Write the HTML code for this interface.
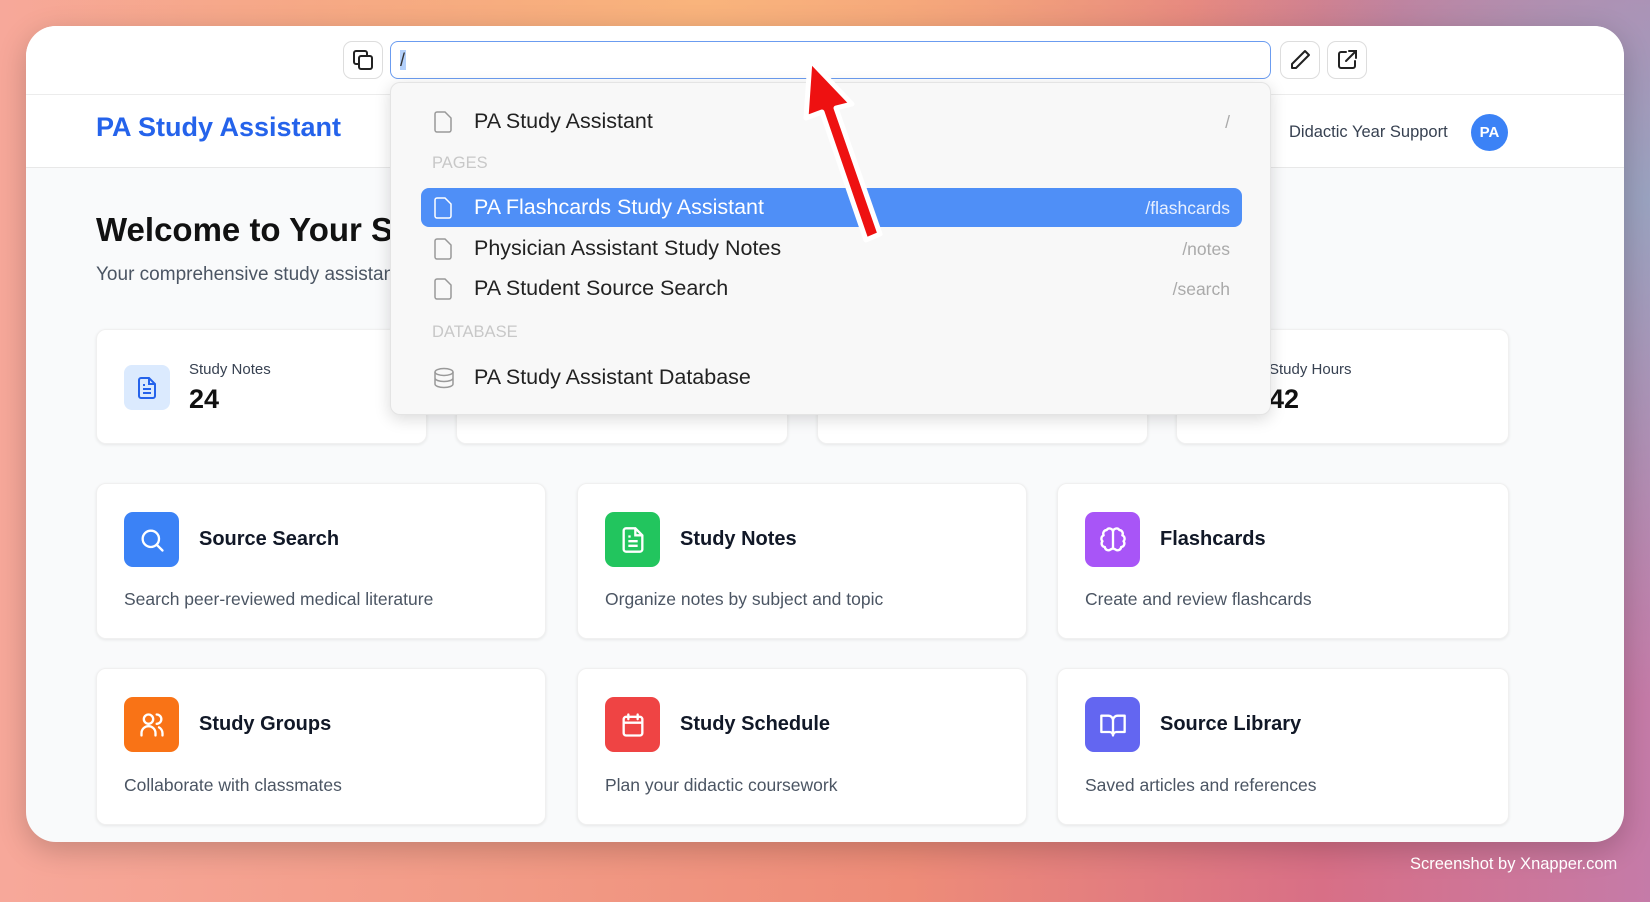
<!DOCTYPE html>
<html><head><meta charset="utf-8"><style>
*{box-sizing:border-box;margin:0;padding:0}
body{width:1650px;height:902px;overflow:hidden;font-family:"Liberation Sans",sans-serif;position:relative;
background:
radial-gradient(ellipse 700px 300px at 700px 0px,#f9b47c 0%,rgba(249,180,124,0) 100%),
radial-gradient(ellipse 500px 500px at 1650px 200px,#9aa3c0 0%,rgba(154,163,192,0) 100%),
linear-gradient(90deg,#f7a89a 0%,#f29b86 30%,#ee8c78 55%,#d86f86 80%,#c57ba8 100%);}
.win{position:absolute;left:26px;top:26px;width:1598px;height:816px;background:#f9fafb;border-radius:30px;overflow:hidden;box-shadow:0 8px 30px rgba(0,0,0,.2)}
.top{position:absolute;left:0;top:0;width:100%;height:69px;background:#fff;border-bottom:1px solid #ececec}
.hdr{position:absolute;left:0;top:69px;width:100%;height:73px;background:#fff;border-bottom:1px solid #e8e8e8}
.btn{position:absolute;top:15px;width:40px;height:38px;border:1px solid #ddd;border-radius:9px;background:#fff;display:flex;align-items:center;justify-content:center}
.url{position:absolute;left:364px;top:15px;width:881px;height:38px;border:1.5px solid #6b9cf0;border-radius:8px;background:#fff}
.card{position:absolute;background:#fff;border-radius:10px;box-shadow:0 1px 3px rgba(0,0,0,.08);border:1px solid #f0f0f0}
.ic{position:absolute;left:27px;width:55px;height:55px;border-radius:9px;display:flex;align-items:center;justify-content:center}
.ttl{position:absolute;left:102px;font-size:20px;font-weight:bold;color:#111827}
.desc{position:absolute;left:27px;font-size:17.5px;color:#4b5563}
.dd{position:absolute;left:364px;top:56px;width:881px;height:333px;background:#f8f8f8;border-radius:10px;box-shadow:0 4px 16px rgba(0,0,0,.15);border:1px solid #e4e4e4}
.it{position:absolute;left:0;width:100%;height:30px;font-size:21.5px;color:#222}
.it .t{position:absolute;left:83px;top:1px}
.it .r{position:absolute;right:40px;top:4px;font-size:17.5px;color:#aaa}
.it svg{position:absolute;left:42px;top:3px}
.lab{position:absolute;left:41px;font-size:16.5px;color:#c8c8c8}
</style></head><body>
<div class="win">
 <div class="top">
  <div class="btn" style="left:317px"><svg width="24" height="24" viewBox="0 0 24 24" fill="none" stroke="#222" stroke-width="2"><rect x="8" y="8" width="13" height="13" rx="2"/><path d="M16 8V5a2 2 0 0 0-2-2H5a2 2 0 0 0-2 2v9a2 2 0 0 0 2 2h3"/></svg></div>
  <div class="url"><div style="position:absolute;left:9px;top:8px;width:6px;height:20px;background:#b3d0fb;font-size:18px;line-height:20px;color:#333">/</div></div>
  <div class="btn" style="left:1254px"><svg width="24" height="24" viewBox="0 0 24 24" fill="none" stroke="#222" stroke-width="2" stroke-linejoin="round"><path d="M17 3l4 4L8 20H4v-4z"/></svg></div>
  <div class="btn" style="left:1301px"><svg width="24" height="24" viewBox="0 0 24 24" fill="none" stroke="#222" stroke-width="2" stroke-linecap="round"><path d="M11 4H6a2 2 0 0 0-2 2v12a2 2 0 0 0 2 2h12a2 2 0 0 0 2-2v-5M14 3h7v7M21 3L11 13"/></svg></div>
 </div>
 <div class="hdr">
  <div style="position:absolute;left:70px;top:17px;font-size:27px;font-weight:bold;color:#2563eb">PA Study Assistant</div>
  <div style="position:absolute;left:1263px;top:28px;font-size:16.5px;color:#374151">Didactic Year Support</div>
  <div style="position:absolute;left:1445px;top:19px;width:37px;height:37px;border-radius:50%;background:#3b82f6;color:#fff;font-weight:bold;font-size:15px;display:flex;align-items:center;justify-content:center">PA</div>
 </div>
 <div style="position:absolute;left:70px;top:185px;font-size:33px;font-weight:bold;color:#111">Welcome to Your Study Assistant</div>
 <div style="position:absolute;left:70px;top:238px;font-size:19px;color:#4b5563">Your comprehensive study assistant for PA school</div>

 <div class="card" style="left:70px;top:303px;width:331px;height:115px">
  <div style="position:absolute;left:27px;top:35px;width:46px;height:45px;border-radius:8px;background:#dbeafe;display:flex;align-items:center;justify-content:center"><svg width="24" height="24" viewBox="0 0 24 24" fill="none" stroke="#2563eb" stroke-width="2"><path d="M14 2H6a2 2 0 0 0-2 2v16a2 2 0 0 0 2 2h12a2 2 0 0 0 2-2V8z"/><path d="M14 2v6h6M8 13h8M8 17h8M8 9h2"/></svg></div>
  <div style="position:absolute;left:92px;top:31px;font-size:15px;color:#374151">Study Notes</div>
  <div style="position:absolute;left:92px;top:54px;font-size:27px;font-weight:bold;color:#111">24</div>
 </div>
 <div class="card" style="left:430px;top:303px;width:332px;height:115px"></div>
 <div class="card" style="left:791px;top:303px;width:331px;height:115px"></div>
 <div class="card" style="left:1150px;top:303px;width:333px;height:115px">
  <div style="position:absolute;left:92px;top:31px;font-size:15px;color:#374151">Study Hours</div>
  <div style="position:absolute;left:92px;top:54px;font-size:27px;font-weight:bold;color:#111">42</div>
 </div>

 <div class="card" style="left:70px;top:457px;width:450px;height:156px">
  <div class="ic" style="top:28px;background:#3b82f6"><svg width="28" height="28" viewBox="0 0 24 24" fill="none" stroke="#fff" stroke-width="2" stroke-linecap="round"><circle cx="11" cy="11" r="7"/><path d="M21 21l-5-5"/></svg></div>
  <div class="ttl" style="top:44px">Source Search</div>
  <div class="desc" style="top:105px">Search peer-reviewed medical literature</div>
 </div>
 <div class="card" style="left:551px;top:457px;width:450px;height:156px">
  <div class="ic" style="top:28px;background:#22c55e"><svg width="28" height="28" viewBox="0 0 24 24" fill="none" stroke="#fff" stroke-width="2"><path d="M14 2H6a2 2 0 0 0-2 2v16a2 2 0 0 0 2 2h12a2 2 0 0 0 2-2V8z"/><path d="M14 2v6h6M8 13h8M8 17h8M8 9h2"/></svg></div>
  <div class="ttl" style="top:44px">Study Notes</div>
  <div class="desc" style="top:105px">Organize notes by subject and topic</div>
 </div>
 <div class="card" style="left:1031px;top:457px;width:452px;height:156px">
  <div class="ic" style="top:28px;background:#a855f7"><svg width="28" height="28" viewBox="0 0 24 24" fill="none" stroke="#fff" stroke-width="2" stroke-linejoin="round"><path d="M12 5a3 3 0 0 0-5.5-1.5A3 3 0 0 0 4 8a3 3 0 0 0-1 5 3 3 0 0 0 2 5 3 3 0 0 0 5 2 2 2 0 0 0 2-2zM12 5a3 3 0 0 1 5.5-1.5A3 3 0 0 1 20 8a3 3 0 0 1 1 5 3 3 0 0 1-2 5 3 3 0 0 1-5 2 2 2 0 0 1-2-2zM12 5v13"/></svg></div>
  <div class="ttl" style="top:44px">Flashcards</div>
  <div class="desc" style="top:105px">Create and review flashcards</div>
 </div>

 <div class="card" style="left:70px;top:642px;width:450px;height:157px">
  <div class="ic" style="top:28px;background:#f97316"><svg width="28" height="28" viewBox="0 0 24 24" fill="none" stroke="#fff" stroke-width="2" stroke-linecap="round"><circle cx="9" cy="7" r="4"/><path d="M3 21v-2a6 6 0 0 1 12 0v2M16 3a4 4 0 0 1 0 8M21 21v-2a6 6 0 0 0-3-5"/></svg></div>
  <div class="ttl" style="top:44px">Study Groups</div>
  <div class="desc" style="top:106px">Collaborate with classmates</div>
 </div>
 <div class="card" style="left:551px;top:642px;width:450px;height:157px">
  <div class="ic" style="top:28px;background:#ef4444"><svg width="28" height="28" viewBox="0 0 24 24" fill="none" stroke="#fff" stroke-width="2" stroke-linecap="round"><rect x="4" y="5" width="16" height="16" rx="2"/><path d="M8 3v4M16 3v4M4 10h16"/></svg></div>
  <div class="ttl" style="top:44px">Study Schedule</div>
  <div class="desc" style="top:106px">Plan your didactic coursework</div>
 </div>
 <div class="card" style="left:1031px;top:642px;width:452px;height:157px">
  <div class="ic" style="top:28px;background:#6366f1"><svg width="28" height="28" viewBox="0 0 24 24" fill="none" stroke="#fff" stroke-width="2" stroke-linejoin="round"><path d="M2 4h6a4 4 0 0 1 4 4v13a3 3 0 0 0-3-3H2zM22 4h-6a4 4 0 0 0-4 4v13a3 3 0 0 1 3-3h7z"/></svg></div>
  <div class="ttl" style="top:44px">Source Library</div>
  <div class="desc" style="top:106px">Saved articles and references</div>
 </div>

 <div class="dd">
  <div class="it" style="top:25px"><svg width="20" height="22" viewBox="0 0 20 22" fill="none" stroke="#999" stroke-width="1.5"><path d="M12 1H4a2 2 0 0 0-2 2v16a2 2 0 0 0 2 2h12a2 2 0 0 0 2-2V7z"/></svg><span class="t">PA Study Assistant</span><span class="r">/</span></div>
  <div class="lab" style="top:71px">PAGES</div>
  <div style="position:absolute;left:30px;top:105px;width:821px;height:39px;background:#4f8ff7;border-radius:8px"></div>
  <div class="it" style="top:111px;color:#fff"><svg width="20" height="22" viewBox="0 0 20 22" fill="none" stroke="#fff" stroke-width="1.5"><path d="M12 1H4a2 2 0 0 0-2 2v16a2 2 0 0 0 2 2h12a2 2 0 0 0 2-2V7z"/></svg><span class="t">PA Flashcards Study Assistant</span><span class="r" style="color:#e8f0ff">/flashcards</span></div>
  <div class="it" style="top:152px"><svg width="20" height="22" viewBox="0 0 20 22" fill="none" stroke="#999" stroke-width="1.5"><path d="M12 1H4a2 2 0 0 0-2 2v16a2 2 0 0 0 2 2h12a2 2 0 0 0 2-2V7z"/></svg><span class="t">Physician Assistant Study Notes</span><span class="r">/notes</span></div>
  <div class="it" style="top:192px"><svg width="20" height="22" viewBox="0 0 20 22" fill="none" stroke="#999" stroke-width="1.5"><path d="M12 1H4a2 2 0 0 0-2 2v16a2 2 0 0 0 2 2h12a2 2 0 0 0 2-2V7z"/></svg><span class="t">PA Student Source Search</span><span class="r">/search</span></div>
  <div class="lab" style="top:240px">DATABASE</div>
  <div class="it" style="top:281px"><svg width="22" height="22" viewBox="0 0 22 22" fill="none" stroke="#999" stroke-width="1.5"><ellipse cx="11" cy="5" rx="9" ry="3.5"/><path d="M2 5v12c0 2 4 3.5 9 3.5s9-1.5 9-3.5V5M2 11c0 2 4 3.5 9 3.5s9-1.5 9-3.5"/></svg><span class="t">PA Study Assistant Database</span></div>
 </div>
</div>
<svg style="position:absolute;left:0;top:0" width="1650" height="902"><path d="M810 60 L852 104 L836 108 L880 234 L866 240 L822 112 L806 118 Z" fill="#ee1111" stroke="#fff" stroke-width="5" stroke-linejoin="round"/></svg>
<div style="position:absolute;left:1410px;top:855px;font-size:16.5px;color:#fff">Screenshot by Xnapper.com</div>
</body></html>
